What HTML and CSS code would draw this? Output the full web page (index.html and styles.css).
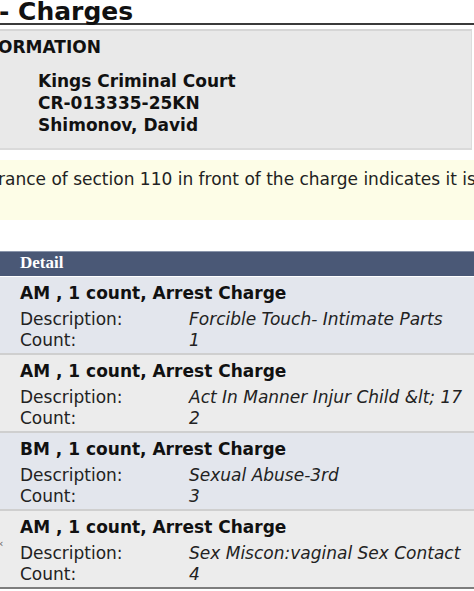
FILE: index.html
```html
<!DOCTYPE html>
<html lang="en">
<head>
<meta charset="utf-8">
<title>Charges</title>
<link rel="stylesheet" href="styles.css">
</head>
<body>
<div class="page">
  <h1 class="page-title">- Charges</h1>

  <section class="info-box">
    <div class="info-head">ORMATION</div>
    <div class="info-lines">
      <div class="info-line">Kings Criminal Court</div>
      <div class="info-line">CR-013335-25KN</div>
      <div class="info-line">Shimonov, David</div>
    </div>
  </section>

  <div class="note">rance of section 110 in front of the charge indicates it is a sex offense</div>

  <section class="detail">
    <div class="detail-head">Detail</div>

    <div class="charge alt">
      <div class="charge-title">AM , 1 count, Arrest Charge</div>
      <div class="charge-grid">
        <span class="lbl">Description:</span><span class="val">Forcible Touch- Intimate Parts</span>
        <span class="lbl">Count:</span><span class="val">1</span>
      </div>
    </div>

    <div class="charge">
      <div class="charge-title">AM , 1 count, Arrest Charge</div>
      <div class="charge-grid">
        <span class="lbl">Description:</span><span class="val">Act In Manner Injur Child &amp;lt; 17</span>
        <span class="lbl">Count:</span><span class="val">2</span>
      </div>
    </div>

    <div class="charge alt">
      <div class="charge-title">BM , 1 count, Arrest Charge</div>
      <div class="charge-grid">
        <span class="lbl">Description:</span><span class="val">Sexual Abuse-3rd</span>
        <span class="lbl">Count:</span><span class="val">3</span>
      </div>
    </div>

    <div class="charge last">
      <span class="edge-mark">‹</span>
      <div class="charge-title">AM , 1 count, Arrest Charge</div>
      <div class="charge-grid">
        <span class="lbl">Description:</span><span class="val">Sex Miscon:vaginal Sex Contact</span>
        <span class="lbl">Count:</span><span class="val">4</span>
      </div>
    </div>
  </section>
</div>
</body>
</html>
```

FILE: styles.css
```css
html, body {
  margin: 0;
  padding: 0;
  background: #ffffff;
  overflow: hidden;
}

.page {
  width: 474px;
  overflow: hidden;
  font-family: "DejaVu Sans", Verdana, sans-serif;
  font-size: 17px;
  color: #111;
}

.page-title {
  margin: 0;
  font-size: 25px;
  line-height: 23px;
  font-weight: bold;
  color: #111;
  padding-top: 0;
  border-bottom: 2px solid #3a3a3a;
  text-indent: -1px;
  white-space: nowrap;
}

.info-box {
  margin: 4px 2px 0 0;
  background: #e9e9e9;
  border-top: 2px solid #d6d6d6;
  border-bottom: 2px solid #dadada;
  border-right: 1px solid #dcdcdc;
  padding: 5px 0 12px;
}

.info-head {
  font-weight: bold;
  line-height: 22px;
  text-indent: -2px;
  color: #111;
}

.info-lines {
  margin-top: 12px;
  padding-left: 38px;
  font-weight: bold;
  line-height: 22px;
  color: #111;
}

.note {
  margin-top: 10px;
  background: #fdfde7;
  padding: 8px 0 30px;
  line-height: 22px;
  white-space: nowrap;
  overflow: hidden;
  text-indent: -2px;
  color: #222;
}

.detail {
  margin-top: 31px;
}

.detail-head {
  border-top: 1px solid #8a95ab;
  background: #4a5876;
  color: #ffffff;
  font-family: "Liberation Serif", "Times New Roman", serif;
  font-weight: bold;
  font-size: 17px;
  line-height: 21px;
  padding: 0 0 3px 20px;
  margin-bottom: 1px;
}

.charge {
  position: relative;
  background: #ececec;
  border-bottom: 2px solid #cfcfcf;
  padding: 6px 0 2px 20px;
  color: #111;
}

.charge.alt {
  background: #e3e6ed;
}

.charge.last {
  border-bottom-color: #7d7d7d;
}

.charge-title {
  font-weight: bold;
  line-height: 20px;
  margin-bottom: 6px;
  white-space: nowrap;
}

.charge-grid {
  display: grid;
  grid-template-columns: 169px auto;
  line-height: 21px;
  white-space: nowrap;
}

.lbl {
  color: #222;
}

.val {
  font-style: italic;
  color: #222;
}

.edge-mark {
  position: absolute;
  left: -1px;
  top: 27px;
  font-size: 11px;
  line-height: 12px;
  color: #666;
}
```
